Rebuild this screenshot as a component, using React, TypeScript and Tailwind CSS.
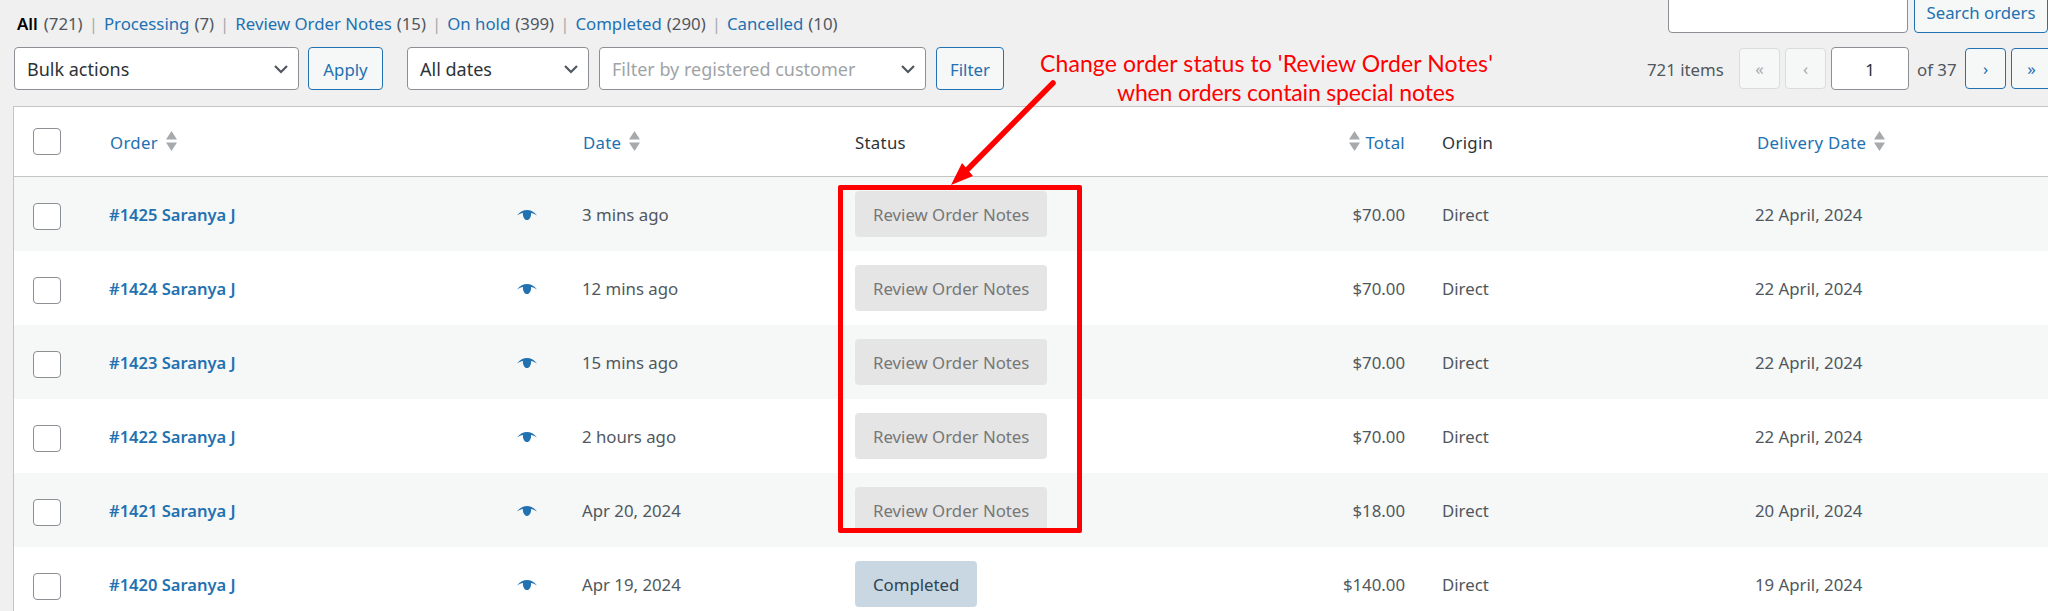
import React from "react";

const font = "font-['Noto_Sans','Open_Sans',sans-serif]";

function Chevron() {
  return (
    <svg width="16" height="10" viewBox="0 0 16 10" className="shrink-0">
      <path d="M2 2l6 6 6-6" fill="none" stroke="#50575e" strokeWidth="2.2" />
    </svg>
  );
}

function Sort() {
  return (
    <svg width="11" height="20" viewBox="0 0 11 20" className="shrink-0 -mt-[4px]">
      <path d="M5.5 0L11 8.5H0z M0 11.5h11L5.5 20z" fill="#a7aaad" />
    </svg>
  );
}

function Eye() {
  return (
    <svg width="20" height="11" viewBox="0 0 20 11">
      <path d="M0 5.5C3 1.6 6.5 0 10 0s7 1.6 10 5.5C17.5 4 15.8 3.2 14 2.9 14.6 6 12.6 10 10 10S5.4 6 6 2.9C4.2 3.2 2.5 4 0 5.5z" fill="#2271b1" />
    </svg>
  );
}

function Select({ w, text, muted }: { w: string; text: string; muted?: boolean }) {
  return (
    <div className={`${w} h-[43px] shrink-0 flex items-center justify-between pl-[12px] pr-[9px] bg-white rounded-[4px] border border-[#8c8f94] text-[18px] ${muted ? "text-[#a0a3a6]" : "text-[#2c3338]"}`}>
      <span className="whitespace-nowrap pt-[2px]">{text}</span>
      <Chevron />
    </div>
  );
}

function Btn({ w, text }: { w: string; text: string }) {
  return (
    <div className={`${w} h-[43px] pt-[2px] shrink-0 flex items-center justify-center rounded-[4px] border border-[#2271b1] bg-[#f6f7f7] text-[#2271b1]`}>{text}</div>
  );
}

function PageBtn({ ch, off, ml }: { ch: string; off?: boolean; ml: string }) {
  return (
    <div className={`w-[41px] h-[41px] shrink-0 flex items-center justify-center rounded-[4px] border ${ml} ${off ? "border-[#dcdcde] text-[#a7aaad]" : "border-[#2271b1] text-[#2271b1]"} bg-[#f6f7f7]`}>{ch}</div>
  );
}

const grid = "grid grid-cols-[96px_473px_272px_475px_112px_315px_1fr] items-center";

const rows = [
  ["#1425 Saranya J", "3 mins ago", "Review Order Notes", "$70.00", "22 April, 2024"],
  ["#1424 Saranya J", "12 mins ago", "Review Order Notes", "$70.00", "22 April, 2024"],
  ["#1423 Saranya J", "15 mins ago", "Review Order Notes", "$70.00", "22 April, 2024"],
  ["#1422 Saranya J", "2 hours ago", "Review Order Notes", "$70.00", "22 April, 2024"],
  ["#1421 Saranya J", "Apr 20, 2024", "Review Order Notes", "$18.00", "20 April, 2024"],
  ["#1420 Saranya J", "Apr 19, 2024", "Completed", "$140.00", "19 April, 2024"],
];

function Check({ row }: { row?: boolean }) {
  return <div className={`w-[28px] h-[27px] ml-[19px] bg-white rounded-[4px] border border-[#8c8f94] ${row ? "mt-[5px]" : ""}`} />;
}

export default function App() {
  const links: [string, string][] = [
    ["Processing", "(7)"],
    ["Review Order Notes", "(15)"],
    ["On hold", "(399)"],
    ["Completed", "(290)"],
    ["Cancelled", "(10)"],
  ];
  return (
    <div className={`${font} relative w-[2048px] h-[611px] overflow-hidden bg-[#f0f0f1] text-[16.8px] text-[#50575e]`}>
      <div className="flex h-[33px] justify-between">
        <div className="pl-[17px] pt-[12px] leading-[24px] whitespace-nowrap flex">
          <span className="font-semibold text-black">All</span>
          <span className="ml-[6px]">(721)</span>
          {links.map(([a, b]) => (
            <span key={a} className="flex">
              <span className="mx-[6px] text-[#a7aaad]">|</span>
              <span className="text-[#2271b1]">{a}</span>
              <span className="ml-[5px]">{b}</span>
            </span>
          ))}
        </div>
        <div className="flex gap-[6px] items-end">
          <div className="w-[240px] h-[43px] shrink-0 bg-white rounded-[4px] border border-[#8c8f94]" />
          <Btn w="w-[134px]" text="Search orders" />
        </div>
      </div>

      <div className="flex items-center mt-[14px] pl-[14px] whitespace-nowrap">
        <Select w="w-[285px]" text="Bulk actions" />
        <div className="ml-[9px]"><Btn w="w-[75px]" text="Apply" /></div>
        <div className="ml-[24px]"><Select w="w-[182px]" text="All dates" /></div>
        <div className="ml-[10px]"><Select w="w-[327px]" text="Filter by registered customer" muted /></div>
        <div className="ml-[10px]"><Btn w="w-[68px]" text="Filter" /></div>
        <div className="ml-[643px] w-[92px] pt-[2px] shrink-0 text-[#50575e]">721 items</div>
        <PageBtn ch="«" off ml="" />
        <PageBtn ch="‹" off ml="ml-[5px]" />
        <div className="ml-[5px] w-[78px] h-[43px] pt-[2px] shrink-0 flex items-center justify-center bg-white rounded-[4px] border border-[#8c8f94] text-[#2c3338]">1</div>
        <div className="ml-[8px] w-[48px] pt-[2px] shrink-0">of 37</div>
        <PageBtn ch="›" ml="" />
        <PageBtn ch="»" ml="ml-[5px]" />
      </div>

      <div className="mt-[16px] ml-[13px] w-[2035px] bg-white border-t border-l border-[#c3c4c7]">
        <div className={`${grid} h-[70px] border-b border-[#c3c4c7] text-[#2271b1] tracking-[0.3px]`}>
          <Check />
          <div className="flex items-center gap-[8px] pt-[2px]">Order <Sort /></div>
          <div className="flex items-center gap-[8px] pt-[2px]">Date <Sort /></div>
          <div className="text-[#2c3338] pt-[2px]">Status</div>
          <div className="flex items-center justify-end gap-[5px] pr-[37px] pt-[2px]"><Sort /> Total</div>
          <div className="text-[#2c3338] pt-[2px]">Origin</div>
          <div className="flex items-center gap-[8px] pt-[2px]">Delivery Date <Sort /></div>
        </div>
        {rows.map((r, i) => (
          <div key={r[0]} className={`${grid} h-[74px] ${i % 2 === 0 ? "bg-[#f6f7f7]" : "bg-white"}`}>
            <Check row />
            <div className="flex items-center justify-between pr-[46px] pt-[2px]">
              <span className="font-semibold text-[16.5px] text-[#2271b1] -ml-[1px]">{r[0]}</span>
              <Eye />
            </div>
            <div className="-ml-[1px] pt-[2px]">{r[1]}</div>
            <div>
              <span className={`inline-flex h-[46px] pt-[2px] items-center px-[18px] rounded-[4px] ${r[2] === "Completed" ? "bg-[#c8d7e1] text-[#2e4453]" : "bg-[#e5e5e5] text-[#777777]"}`}>{r[2]}</span>
            </div>
            <div className="text-right pr-[37px] pt-[2px]">{r[3]}</div>
            <div className="pt-[2px]">Direct</div>
            <div className="-ml-[2px] pt-[2px]">{r[4]}</div>
          </div>
        ))}
      </div>

      {/* annotation overlay */}
      <div className="absolute left-[838px] top-[185px] w-[244px] h-[348px] border-[5px] border-[#ff0000] rounded-[2px]" />
      <svg className="absolute left-[940px] top-[78px]" width="125" height="112" viewBox="0 0 125 112">
        <path d="M113 5L27 92" fill="none" stroke="#ff0000" strokeWidth="5.5" strokeLinecap="round" />
        <path d="M11 107L22 85 33 98z" fill="#ff0000" />
      </svg>
      <div className="absolute left-[1040px] top-[48px] text-[23px] leading-[30px] tracking-[0.1px] text-[#ff0000] font-['Lato',sans-serif] whitespace-nowrap">Change order status to 'Review Order Notes'</div>
      <div className="absolute left-[1117px] top-[77px] text-[23px] leading-[30px] tracking-[-0.15px] text-[#ff0000] font-['Lato',sans-serif] whitespace-nowrap">when orders contain special notes</div>
    </div>
  );
}
